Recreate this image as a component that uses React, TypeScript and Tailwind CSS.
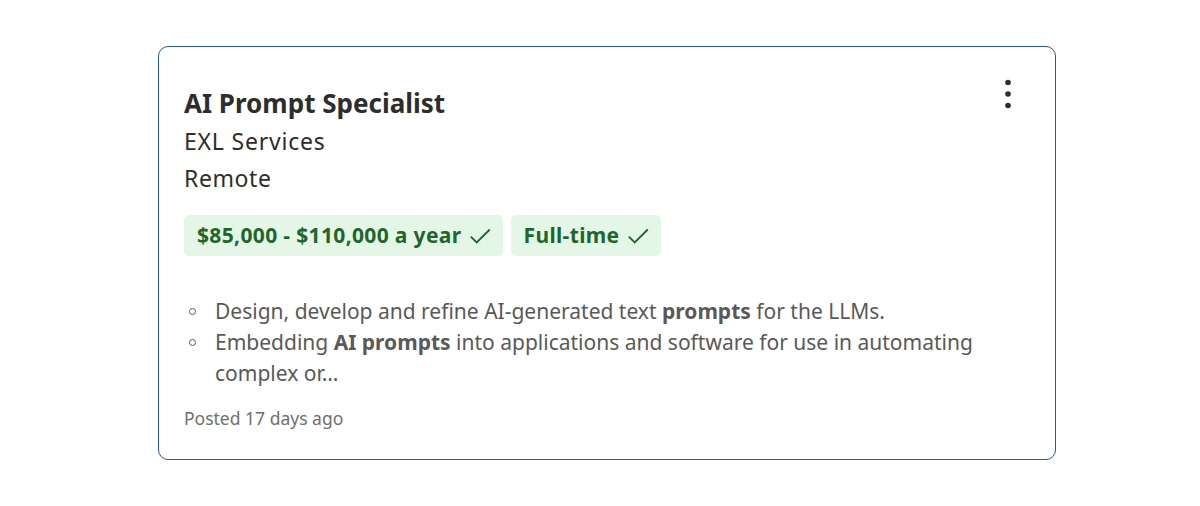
function CheckMark() {
  return (
    <svg viewBox="0 0 24 24" className="ml-[5px] h-[26px] w-[26px]" fill="none" stroke="currentColor" strokeWidth={1.7}>
      <path d="M3.5 12.5l5.5 5.5L21 6" />
    </svg>
  )
}

function Bullet({ children }: { children: React.ReactNode }) {
  return (
    <li className="flex">
      <span className="mt-[12px] ml-[5px] mr-[19px] h-[7px] w-[7px] shrink-0 rounded-full border-[1.5px] border-[#595959]" />
      <span>{children}</span>
    </li>
  )
}

export default function App() {
  return (
    <div className="min-h-[506px] w-full bg-white pl-[158px] pt-[46px] font-['Noto_Sans',sans-serif]">
      <div className="relative h-[414px] w-[898px] rounded-[10px] border-[1.5px] border-[#2557a7] pl-[25px] pr-[50px] pt-[38px]">
        <button type="button" className="absolute right-[42px] top-[32px] text-[#2d2d2d]">
          <svg width="10" height="30" viewBox="0 0 10 30" fill="currentColor">
            <circle cx="5" cy="3.5" r="2.8" />
            <circle cx="5" cy="15" r="2.8" />
            <circle cx="5" cy="26.5" r="2.8" />
          </svg>
        </button>
        <h2 className="text-[26px] font-bold leading-[36px] text-[#2d2d2d]">AI Prompt Specialist</h2>
        <p className="mt-[1px] text-[23px] leading-[38px] tracking-[0.8px] text-[#2d2d2d]">EXL Services</p>
        <p className="text-[23px] leading-[36px] tracking-[0.6px] text-[#2d2d2d]">Remote</p>
        <div className="mt-[19px] flex gap-[8px]">
          <span className="flex h-[41px] items-center rounded-[5px] bg-[#e4f7e6] pl-[13px] pr-[10px] text-[21px] font-bold tracking-[0.35px] text-[#1f662c]">
            $85,000 - $110,000 a year
            <CheckMark />
          </span>
          <span className="flex h-[41px] items-center rounded-[5px] bg-[#e4f7e6] pl-[13px] pr-[10px] text-[21px] font-bold tracking-[0.35px] text-[#1f662c]">
            Full-time
            <CheckMark />
          </span>
        </div>
        <ul className="mt-[40px] text-[21px] leading-[31px] text-[#595959]">
          <Bullet>
            Design, develop and refine AI-generated text <b>prompts</b> for the LLMs.
          </Bullet>
          <Bullet>
            Embedding <b>AI prompts</b> into applications and software for use in automating complex or…
          </Bullet>
        </ul>
        <p className="mt-[16px] text-[17.5px] text-[#6f6f6f]">Posted 17 days ago</p>
      </div>
    </div>
  )
}
